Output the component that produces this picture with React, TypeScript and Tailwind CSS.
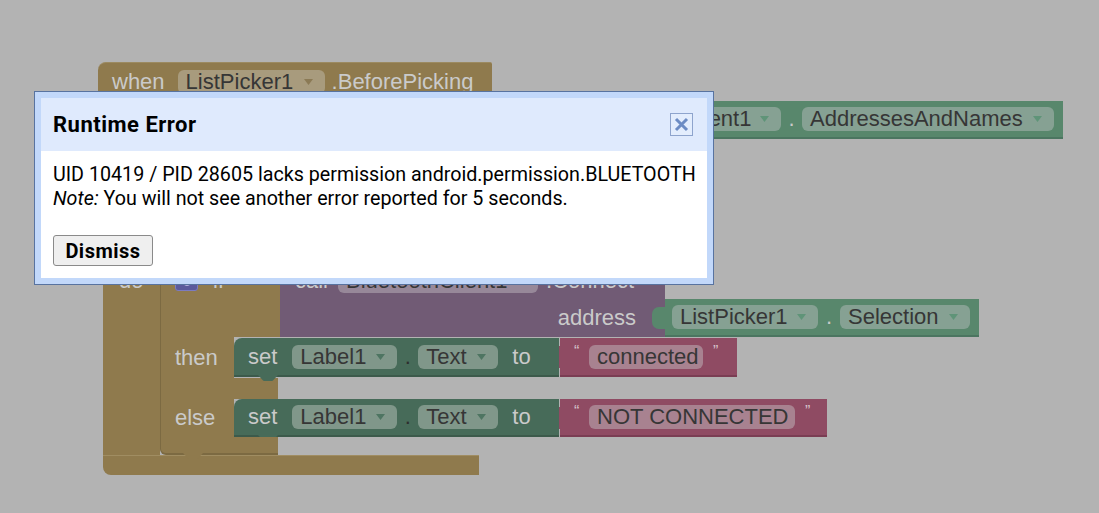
import React from "react";

const Arrow = ({ color }: { color: string }) => (
  <svg width="9" height="6" viewBox="0 0 9 6" className="shrink-0">
    <path d="M0 0h9L4.5 6z" fill={color} />
  </svg>
);

function Pill({
  text,
  w,
  bg,
  arrow,
}: {
  text: string;
  w: string;
  bg: string;
  arrow?: string;
}) {
  return (
    <div
      className={`flex h-[24px] shrink-0 items-center justify-between rounded-[6px] pl-[8px] pr-[12px] leading-none text-[#363636] ${w} ${bg}`}
    >
      <span>{text}</span>
      {arrow ? <Arrow color={arrow} /> : null}
    </div>
  );
}

const Lbl = ({ children, cls = "" }: { children: React.ReactNode; cls?: string }) => (
  <span className={`shrink-0 leading-none text-[#cacaca] ${cls}`}>{children}</span>
);

const BottomTab = ({ color, cls }: { color: string; cls: string }) => (
  <svg className={`absolute top-full ${cls}`} width="20" height="6" viewBox="0 0 20 6">
    <path d="M0 0h20l-5 5.5q-1 .5-2 .5h-6q-1 0-2-.5z" fill={color} />
  </svg>
);

const ValueTab = ({ bg, cls = "" }: { bg: string; cls?: string }) => (
  <div className={`h-[22px] w-[13px] shrink-0 rounded-l-[7px] ${bg} ${cls}`} />
);

function SetBlock({ w, h }: { w: string; h: string }) {
  return (
    <div
      className={`relative flex shrink-0 items-center rounded-tl-[8px] border-b-[2px] border-[#3c5a4b] bg-[#476b59] pl-[14px] ${w} ${h}`}
    >
      <Lbl>set</Lbl>
      <div className="ml-[15px]">
        <Pill text="Label1" w="w-[105px]" bg="bg-[#80978a]" arrow="#4e7562" />
      </div>
      <span className="w-[21px] shrink-0 text-center leading-none text-[#2e2e2e]">.</span>
      <Pill text="Text" w="w-[80px]" bg="bg-[#80978a]" arrow="#4e7562" />
      <Lbl cls="ml-[14px]">to</Lbl>
      <BottomTab color="#476b59" cls="left-[24px]" />
    </div>
  );
}

function TextBlock({ text, bodyW, pillW, h }: { text: string; bodyW: string; pillW: string; h: string }) {
  return (
    <div className="ml-[-12px] flex shrink-0 items-start">
      <ValueTab bg="bg-[#8f4b63]" cls="mt-[8px]" />
      <div
        className={`flex shrink-0 items-center border-b-[2px] border-[#7a3d53] bg-[#8f4b63] pl-[14px] ${bodyW} ${h}`}
      >
        <span className="mt-[-10px] w-[15px] shrink-0 text-[16px] leading-none text-[#d6c3cb]">“</span>
        <div
          className={`flex h-[24px] shrink-0 items-center rounded-[6px] bg-[#a88290] pl-[8px] leading-none text-[#363636] ${pillW}`}
        >
          {text}
        </div>
        <span className="ml-[10px] mt-[-10px] shrink-0 text-[16px] leading-none text-[#d6c3cb]">”</span>
      </div>
    </div>
  );
}

export default function App() {
  return (
    <div className="relative h-[513px] w-full overflow-hidden bg-[#b3b3b3] font-['Liberation_Sans',Arial,sans-serif] text-[22px]">
      {/* Block A: when ListPicker1.BeforePicking */}
      <div className="absolute left-[98px] top-[62px] flex flex-col">
        <div className="flex h-[39px] w-[394px] items-center rounded-tl-[8px] rounded-tr-[2px] border-t border-[#9c8a60] bg-[#8f7a4d] pl-[14px]">
          <Lbl>when</Lbl>
          <div className="ml-[13px]">
            <Pill text="ListPicker1" w="w-[147px]" bg="bg-[#a89b7d]" arrow="#8b7a55" />
          </div>
          <Lbl cls="ml-[7px]">.BeforePicking</Lbl>
        </div>
        <div className="flex items-start">
          <div className="h-[38px] w-[57px] shrink-0 bg-[#8f7a4d]" />
          {/* set block hidden under the dialog */}
          <div className="relative flex h-[38px] w-[419px] shrink-0 items-center rounded-tl-[8px] bg-[#476b59] pl-[14px]">
            <div className="ml-[44px] h-[24px] w-[147px] rounded-[6px] bg-[#80978a]" />
            <div className="ml-[22px] h-[24px] w-[118px] rounded-[6px] bg-[#80978a]" />
          </div>
          <div className="ml-[-12px] flex shrink-0 items-start">
            <ValueTab bg="bg-[#58876c]" cls="mt-[8px]" />
            <div className="flex h-[38px] w-[488px] shrink-0 items-center border-b-[2px] border-[#4b7560] bg-[#58876c] pl-[7px]">
              <Pill text="BluetoothClient1" w="w-[199px]" bg="bg-[#86a193]" arrow="#5f9478" />
              <span className="w-[21px] shrink-0 text-center leading-none text-[#cacaca]">.</span>
              <Pill text="AddressesAndNames" w="w-[252px]" bg="bg-[#86a193]" arrow="#5f9478" />
            </div>
          </div>
        </div>
        <div className="h-[20px] w-[376px] rounded-bl-[8px] bg-[#8f7a4d]" />
      </div>

      {/* Block B: when ListPicker1.AfterPicking (top row hidden under the dialog) */}
      <div className="absolute left-[103px] top-[222px] flex flex-col">
        <div className="flex h-[40px] w-[376px] items-center rounded-tl-[8px] bg-[#8f7a4d] pl-[14px]">
          <div className="ml-[66px] h-[24px] w-[147px] rounded-[6px] bg-[#a89b7d]" />
        </div>
        <div className="flex items-stretch">
          <div className="w-[57px] shrink-0 bg-[#8f7a4d]">
            <div className="flex h-[38px] items-center pl-[16px]">
              <Lbl>do</Lbl>
            </div>
          </div>
          {/* if block */}
          <div className="flex flex-col">
            {/* row A */}
            <div className="flex items-start">
              <div className="flex h-[75px] w-[120px] shrink-0 items-start border-l border-[#7c6a42] bg-[#8f7a4d]">
                <div className="flex h-[37px] items-center gap-[15px] pl-[14px]">
                  <div className="flex h-[20px] w-[23px] items-center justify-center rounded-[3px] border border-[#7c7bc0] bg-[#5b5a9c]">
                    <svg width="12" height="12" viewBox="0 0 12 12">
                      <circle cx="6" cy="6" r="4" fill="none" stroke="#b9b8de" strokeWidth="2" />
                    </svg>
                  </div>
                  <Lbl>if</Lbl>
                </div>
              </div>
              <div className="flex h-[75px] w-[385px] shrink-0 flex-col bg-[#715b75]">
                <div className="flex h-[37px] items-center pl-[15px]">
                  <Lbl>call</Lbl>
                  <div className="ml-[10px]">
                    <Pill text="BluetoothClient1" w="w-[200px]" bg="bg-[#978899]" arrow="#7a6580" />
                  </div>
                  <Lbl cls="ml-[8px]">.Connect</Lbl>
                </div>
                <div className="flex h-[38px] items-center justify-end pr-[29px]">
                  <Lbl>address</Lbl>
                </div>
              </div>
              <div className="ml-[-13px] mt-[37px] flex shrink-0 items-start">
                <ValueTab bg="bg-[#58876c]" cls="mt-[8px]" />
                <div className="flex h-[38px] w-[314px] shrink-0 items-center border-b-[2px] border-[#4b7560] bg-[#58876c] pl-[7px]">
                  <Pill text="ListPicker1" w="w-[146px]" bg="bg-[#86a193]" arrow="#5f9478" />
                  <span className="w-[22px] shrink-0 text-center leading-none text-[#cacaca]">.</span>
                  <Pill text="Selection" w="w-[130px]" bg="bg-[#86a193]" arrow="#5f9478" />
                </div>
              </div>
            </div>
            {/* row B */}
            <div className="flex items-start">
              <div className="flex h-[41px] w-[74px] shrink-0 items-center border-l border-[#7c6a42] bg-[#8f7a4d] pl-[14px]">
                <Lbl>then</Lbl>
              </div>
              <div className="mt-[1px] flex items-start">
                <SetBlock w="w-[325px]" h="h-[39px]" />
                <TextBlock text="connected" bodyW="w-[177px]" pillW="w-[114px]" h="h-[39px]" />
              </div>
            </div>
            {/* row C */}
            <div className="h-[21px] w-[118px] border-l border-[#7c6a42] bg-[#8f7a4d]" />
            {/* row D */}
            <div className="flex items-start">
              <div className="flex h-[38px] w-[74px] shrink-0 items-center border-l border-[#7c6a42] bg-[#8f7a4d] pl-[14px]">
                <Lbl>else</Lbl>
              </div>
              <div className="flex items-start">
                <SetBlock w="w-[325px]" h="h-[38px]" />
                <TextBlock text="NOT CONNECTED" bodyW="w-[267px]" pillW="w-[206px]" h="h-[38px]" />
              </div>
            </div>
            {/* row E */}
            <div className="relative h-[18px] w-[118px] rounded-bl-[6px] border-b-[2px] border-l border-[#7c6a42] bg-[#8f7a4d]">
              <BottomTab color="#8f7a4d" cls="left-[22px]" />
            </div>
          </div>
        </div>
        <div className="h-[20px] w-[376px] rounded-bl-[8px] border-t border-[#a08d62] bg-[#8f7a4d]" />
      </div>

      {/* Dialog */}
      <div className="absolute left-[34px] top-[91px] w-[680px] border border-[#5873a0] bg-[#c2d8fa] p-[6px] font-['Roboto',sans-serif]">
        <div className="flex h-[53px] items-center justify-between bg-[#dfeafd] pl-[12px] pr-[14px]">
          <div className="text-[22px] font-bold leading-none tracking-[0.5px] text-black">Runtime Error</div>
          <button className="flex h-[23px] w-[23px] items-center justify-center border border-[#8ea4cd] bg-[#e3edfd]">
            <svg width="15" height="15" viewBox="0 0 15 15">
              <path d="M2 2L13 13M13 2L2 13" stroke="#6c8cc4" strokeWidth="3" />
            </svg>
          </button>
        </div>
        <div className="bg-white px-[12px] pb-[12px] pt-[12px] text-[19.7px] leading-[24px] text-black">
          <div className="whitespace-nowrap">UID 10419 / PID 28605 lacks permission android.permission.BLUETOOTH</div>
          <div className="whitespace-nowrap">
            <i>Note:</i> You will not see another error reported for 5 seconds.
          </div>
          <button className="mt-[24px] block h-[31px] w-[100px] rounded-[3px] border border-[#8a8a8a] bg-[#efefef] text-[20px] font-bold leading-none tracking-[0.5px] text-black">
            Dismiss
          </button>
        </div>
      </div>
    </div>
  );
}
